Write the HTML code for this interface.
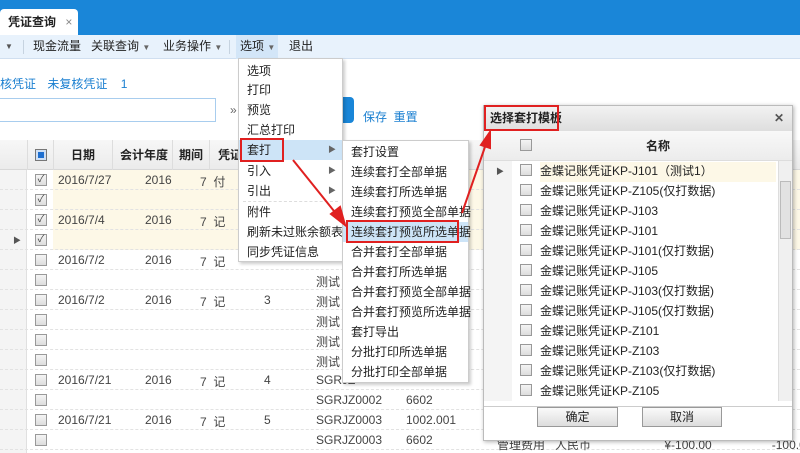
<!DOCTYPE html><html><head><meta charset="utf-8"><style>
*{margin:0;padding:0;box-sizing:border-box}
body{width:800px;height:453px;overflow:hidden;background:#fff;font-family:"Liberation Sans","Noto Sans CJK SC",sans-serif;font-size:12px;color:#222;position:relative}
.a{position:absolute;white-space:nowrap}
.cb{position:absolute;width:12px;height:12px;border:1px solid #999;background:linear-gradient(#f4f4f4,#ddd)}
.row{position:absolute;left:0;width:800px;height:20px;border-bottom:1px dashed #e2e2e2}
.mi{position:absolute;left:0;height:20px;line-height:20px;padding-left:8px;width:100%}
</style></head><body>
<div class="a" style="left:0;top:0;width:800px;height:35px;background:#1a86d8"></div>
<div class="a" style="left:0;top:9px;width:78px;height:26px;background:#fff;border-radius:4px 4px 0 0;line-height:26px;padding-left:8px;font-weight:bold;font-size:12px">凭证查询 <span style="color:#888;font-weight:normal;margin-left:6px">×</span></div>
<div class="a" style="left:0;top:35px;width:800px;height:24px;background:#e8f2fc;border-bottom:1px solid #d0dff0;line-height:23px">
<span class="a" style="left:5px;color:#555;font-size:8px">▼</span>
<span class="a" style="left:23px;top:5px;height:14px;border-left:1px solid #c6d3e0"></span>
<span class="a" style="left:33px">现金流量</span>
<span class="a" style="left:91px">关联查询 <span style="font-size:8px;color:#666">▼</span></span>
<span class="a" style="left:163px">业务操作 <span style="font-size:8px;color:#666">▼</span></span>
<span class="a" style="left:229px;top:5px;height:14px;border-left:1px solid #c6d3e0"></span>
<span class="a" style="left:236px;top:0;height:24px;width:42px;background:#d3e6f8;padding-left:4px">选项 <span style="font-size:8px;color:#666">▼</span></span>
<span class="a" style="left:289px">退出</span>
</div>
<div class="a" style="left:0;top:75px;color:#1a7fd0">核凭证 <span style="margin-left:8px">未复核凭证</span> <span style="margin-left:10px">1</span></div>
<div class="a" style="left:-2px;top:98px;width:218px;height:24px;border:1px solid #a8cdee"></div>
<div class="a" style="left:230px;top:103px;color:#666">»</div>
<div class="a" style="left:340px;top:97px;width:14px;height:26px;background:#1a86d8;border-radius:0 4px 4px 0"></div>
<div class="a" style="left:363px;top:108px;color:#1a7fd0">保存 &nbsp;重置</div>
<div class="a" style="left:0;top:140px;width:800px;height:30px;background:linear-gradient(#f7f7f7,#ebebeb);border-bottom:1px solid #d8d8d8;font-weight:bold;line-height:30px">
<span class="a" style="left:27px;top:0;height:30px;border-left:1px solid #ddd"></span>
<span class="a" style="left:35px;top:9px;width:12px;height:12px;border:1px solid #777;background:#1e6fd0;box-shadow:inset 0 0 0 2px #cfe0f5"></span>
<span class="a" style="left:53px;top:0;height:30px;border-left:1px solid #ddd"></span>
<span class="a" style="left:71px">日期</span>
<span class="a" style="left:112px;top:0;height:30px;border-left:1px solid #ddd"></span>
<span class="a" style="left:120px">会计年度</span>
<span class="a" style="left:172px;top:0;height:30px;border-left:1px solid #ddd"></span>
<span class="a" style="left:179px">期间</span>
<span class="a" style="left:209px;top:0;height:30px;border-left:1px solid #ddd"></span>
<span class="a" style="left:218px">凭证</span>
</div>
<div class="a" style="left:0;top:170px;width:27px;height:283px;background:#f4f4f4;border-right:1px solid #e0e0e0"></div>
<div class="a" style="left:53px;top:170px;width:747px;height:80px;background:#fdf8e7"></div>
<div class="a" style="left:13px;top:235px;font-size:8px;color:#555">▶</div>
<div class="row" style="top:170px"></div><div class="row" style="top:190px"></div><div class="row" style="top:210px"></div><div class="row" style="top:230px"></div><div class="row" style="top:250px"></div><div class="row" style="top:270px"></div><div class="row" style="top:290px"></div><div class="row" style="top:310px"></div><div class="row" style="top:330px"></div><div class="row" style="top:350px"></div><div class="row" style="top:370px"></div><div class="row" style="top:390px"></div><div class="row" style="top:410px"></div><div class="row" style="top:430px"></div>
<div class="cb" style="left:35px;top:174px;font-size:10px;line-height:10px;text-align:center;color:#444">✓</div>
<div class="cb" style="left:35px;top:194px;font-size:10px;line-height:10px;text-align:center;color:#444">✓</div>
<div class="cb" style="left:35px;top:214px;font-size:10px;line-height:10px;text-align:center;color:#444">✓</div>
<div class="cb" style="left:35px;top:234px;font-size:10px;line-height:10px;text-align:center;color:#444">✓</div>
<div class="cb" style="left:35px;top:254px"></div><div class="cb" style="left:35px;top:274px"></div><div class="cb" style="left:35px;top:294px"></div><div class="cb" style="left:35px;top:314px"></div><div class="cb" style="left:35px;top:334px"></div><div class="cb" style="left:35px;top:354px"></div><div class="cb" style="left:35px;top:374px"></div><div class="cb" style="left:35px;top:394px"></div><div class="cb" style="left:35px;top:414px"></div><div class="cb" style="left:35px;top:434px"></div>
<div class="a" style="left:58px;top:173px;color:#444">2016/7/27</div><div class="a" style="left:145px;top:173px;color:#444">2016</div><div class="a" style="left:200px;top:173px;color:#444">7 &nbsp;付</div>
<div class="a" style="left:58px;top:213px;color:#444">2016/7/4</div><div class="a" style="left:145px;top:213px;color:#444">2016</div><div class="a" style="left:200px;top:213px;color:#444">7 &nbsp;记</div>
<div class="a" style="left:58px;top:253px;color:#444">2016/7/2</div><div class="a" style="left:145px;top:253px;color:#444">2016</div><div class="a" style="left:200px;top:253px;color:#444">7 &nbsp;记</div>
<div class="a" style="left:58px;top:293px;color:#444">2016/7/2</div><div class="a" style="left:145px;top:293px;color:#444">2016</div><div class="a" style="left:200px;top:293px;color:#444">7 &nbsp;记</div><div class="a" style="left:264px;top:293px;color:#444">3</div>
<div class="a" style="left:58px;top:373px;color:#444">2016/7/21</div><div class="a" style="left:145px;top:373px;color:#444">2016</div><div class="a" style="left:200px;top:373px;color:#444">7 &nbsp;记</div><div class="a" style="left:264px;top:373px;color:#444">4</div>
<div class="a" style="left:58px;top:413px;color:#444">2016/7/21</div><div class="a" style="left:145px;top:413px;color:#444">2016</div><div class="a" style="left:200px;top:413px;color:#444">7 &nbsp;记</div><div class="a" style="left:264px;top:413px;color:#444">5</div>
<div class="a" style="left:316px;top:273px;color:#444">测试</div><div class="a" style="left:316px;top:293px;color:#444">测试</div><div class="a" style="left:316px;top:313px;color:#444">测试</div><div class="a" style="left:316px;top:333px;color:#444">测试</div><div class="a" style="left:316px;top:353px;color:#444">测试</div>
<div class="a" style="left:316px;top:373px;color:#444">SGRJZ</div>
<div class="a" style="left:316px;top:393px;color:#444">SGRJZ0002</div><div class="a" style="left:406px;top:393px;color:#444">6602</div>
<div class="a" style="left:316px;top:413px;color:#444">SGRJZ0003</div><div class="a" style="left:406px;top:413px;color:#444">1002.001</div>
<div class="a" style="left:316px;top:433px;color:#444">SGRJZ0003</div><div class="a" style="left:406px;top:433px;color:#444">6602</div>
<div class="a" style="left:497px;top:436px;color:#444">管理费用 &nbsp; 人民币 <span style="margin-left:70px">¥-100.00</span><span style="margin-left:60px">-100.00</span></div>
<div class="a" style="left:238px;top:58px;width:105px;height:204px;background:#fff;border:1px solid #ccc;box-shadow:2px 2px 3px rgba(0,0,0,.2)">
<div class="mi" style="top:2px">选项</div><div class="mi" style="top:21px">打印</div><div class="mi" style="top:41px">预览</div><div class="mi" style="top:61px">汇总打印</div>
<div class="mi" style="top:81px;background:#cde4f7">套打<span style="position:absolute;right:6px;font-size:8px;color:#666">▶</span></div>
<div class="mi" style="top:102px">引入<span style="position:absolute;right:6px;font-size:8px;color:#666">▶</span></div>
<div class="mi" style="top:122px">引出<span style="position:absolute;right:6px;font-size:8px;color:#666">▶</span></div>
<div style="position:absolute;left:4px;right:4px;top:142px;border-top:1px dashed #ddd"></div>
<div class="mi" style="top:143px">附件</div><div class="mi" style="top:163px">刷新未过账余额表</div><div class="mi" style="top:183px">同步凭证信息</div>
</div>
<div class="a" style="left:240px;top:138px;width:44px;height:24px;border:2px solid #e02020"></div>
<div class="a" style="left:342px;top:140px;width:127px;height:243px;background:#fff;border:1px solid #ccc;box-shadow:2px 2px 3px rgba(0,0,0,.2)">
<div class="mi" style="top:1px">套打设置</div><div class="mi" style="top:21px">连续套打全部单据</div><div class="mi" style="top:41px">连续套打所选单据</div><div class="mi" style="top:61px">连续套打预览全部单据</div>
<div class="mi" style="top:81px;background:#cde4f7">连续套打预览所选单据</div>
<div class="mi" style="top:101px">合并套打全部单据</div><div class="mi" style="top:121px">合并套打所选单据</div><div class="mi" style="top:141px">合并套打预览全部单据</div><div class="mi" style="top:161px">合并套打预览所选单据</div><div class="mi" style="top:181px">套打导出</div><div class="mi" style="top:201px">分批打印所选单据</div><div class="mi" style="top:221px">分批打印全部单据</div>
</div>
<div class="a" style="left:346px;top:220px;width:113px;height:23px;border:2px solid #e02020"></div>
<div class="a" style="left:483px;top:105px;width:310px;height:336px;background:#fff;border:1px solid #bbb;box-shadow:1px 1px 4px rgba(0,0,0,.3)">
<div class="a" style="left:0;top:0;width:308px;height:25px;background:linear-gradient(#f2f2f2,#dedede);font-weight:bold;line-height:25px;padding-left:6px">选择套打模板<span style="position:absolute;right:8px;color:#555">✕</span></div>
<div class="a" style="left:0;top:25px;width:308px;height:30px;background:linear-gradient(#f8f8f8,#ececec);border-bottom:1px solid #ddd;font-weight:bold;text-align:center;line-height:30px;padding-left:40px">名称</div>
<div class="cb" style="left:36px;top:33px"></div>
<div class="a" style="left:0;top:55px;width:28px;height:240px;background:#f4f4f4"></div>
<div class="a" style="left:56px;top:56px;width:236px;height:20px;background:#fdf8e7"></div>
<div class="a" style="left:12px;top:60px;font-size:8px;color:#555">▶</div>
<div class="a" style="left:294px;top:55px;width:14px;height:240px;background:#f0f0f0;border-left:1px solid #ddd"><div style="position:absolute;left:1px;top:20px;width:11px;height:58px;background:#e2e2e2;border:1px solid #bbb"></div></div>
<div class="a" style="left:0;top:300px;width:308px;border-top:1px solid #ccc"></div>
<div class="a" style="left:53px;top:301px;width:81px;height:20px;border:1px solid #999;background:linear-gradient(#fafafa,#ddd);text-align:center;line-height:18px">确定</div>
<div class="a" style="left:158px;top:301px;width:80px;height:20px;border:1px solid #999;background:linear-gradient(#fafafa,#ddd);text-align:center;line-height:18px">取消</div>
</div>
<div class="a" style="left:484px;top:105px;width:75px;height:26px;border:2px solid #e02020"></div>
<div class="a" style="left:540px;top:161px;line-height:20px">
<div>金蝶记账凭证KP-J101（测试1）</div><div>金蝶记账凭证KP-Z105(仅打数据)</div><div>金蝶记账凭证KP-J103</div><div>金蝶记账凭证KP-J101</div><div>金蝶记账凭证KP-J101(仅打数据)</div><div>金蝶记账凭证KP-J105</div><div>金蝶记账凭证KP-J103(仅打数据)</div><div>金蝶记账凭证KP-J105(仅打数据)</div><div>金蝶记账凭证KP-Z101</div><div>金蝶记账凭证KP-Z103</div><div>金蝶记账凭证KP-Z103(仅打数据)</div><div>金蝶记账凭证KP-Z105</div>
</div>
<div class="cb" style="left:520px;top:164px"></div><div class="cb" style="left:520px;top:184px"></div><div class="cb" style="left:520px;top:204px"></div><div class="cb" style="left:520px;top:224px"></div><div class="cb" style="left:520px;top:244px"></div><div class="cb" style="left:520px;top:264px"></div><div class="cb" style="left:520px;top:284px"></div><div class="cb" style="left:520px;top:304px"></div><div class="cb" style="left:520px;top:324px"></div><div class="cb" style="left:520px;top:344px"></div><div class="cb" style="left:520px;top:364px"></div><div class="cb" style="left:520px;top:384px"></div>
<svg class="a" style="left:0;top:0" width="800" height="453"><g stroke="#e02020" stroke-width="2" fill="#e02020">
<line x1="293" y1="160" x2="338" y2="216"/><polygon points="345,225 331,214 340,207"/>
<line x1="462" y1="213" x2="486" y2="144"/><polygon points="490,132 490,148 481,145"/></g></svg>
</body></html>
